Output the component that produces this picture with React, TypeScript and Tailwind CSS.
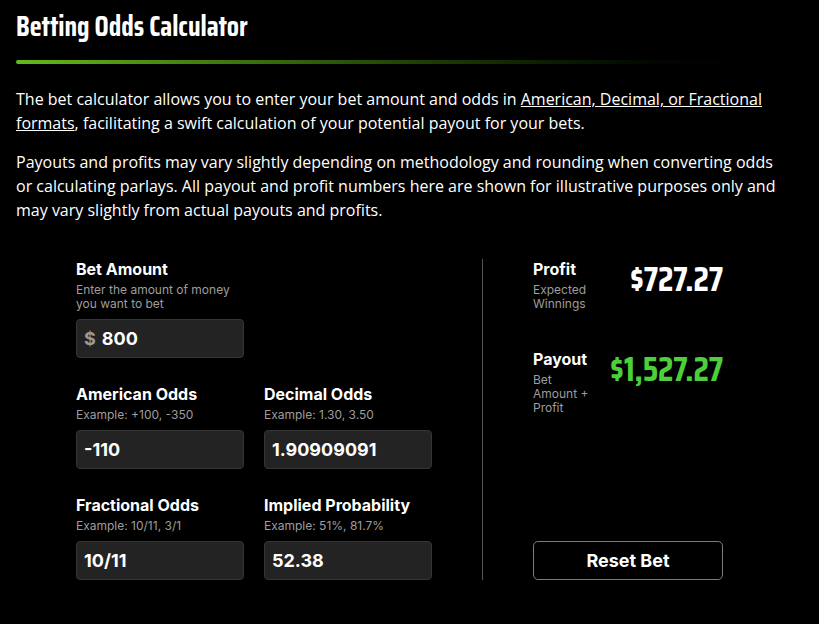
const condensed = { fontFamily: '"Saira Condensed","Liberation Sans Narrow","DejaVu Sans Condensed","Roboto Condensed",sans-serif' }

function Field({ label, hint, value, prefix }: { label: string; hint: string; value: string; prefix?: string }) {
  return (
    <div className="flex flex-col">
      <div className="text-[16px] font-bold leading-5 text-white">{label}</div>
      <div className="mt-1 text-[12px] leading-[14px] text-[#9d9d9d]">{hint}</div>
      <div className="mt-2 flex h-[39px] items-center rounded-[4px] border border-[#353535] bg-[#232323] px-[7px] text-[18px] font-bold">
        {prefix && <span className="mr-[6px] text-[#9a9a9a]">{prefix}</span>}
        <span className="text-white">{value}</span>
      </div>
    </div>
  )
}

function Result({ label, hint, amount, green }: { label: string; hint: string; amount: string; green?: boolean }) {
  return (
    <div className="flex items-start">
      <div className="w-[58px] flex-none">
        <div className="text-[16px] font-bold leading-5 text-white">{label}</div>
        <div className="mt-1 text-[12px] leading-[14px] text-[#9d9d9d]">{hint}</div>
      </div>
      <div
        style={condensed}
        className={`ml-auto text-[34px] font-bold leading-10 ${green ? 'text-[#4ccf3a]' : 'text-white'}`}
      >
        {amount}
      </div>
    </div>
  )
}

export default function App() {
  return (
    <div className="min-h-screen bg-black px-4 pt-[9px] pb-10 text-white" style={{ fontFamily: '"Open Sans",sans-serif' }}>
      <h1 style={condensed} className="text-[28px] font-bold leading-[35px] text-white">
        Betting Odds Calculator
      </h1>
      <div className="mt-4 h-1 w-[764px] rounded-full bg-linear-to-r from-[#64b91d] to-black" />

      <div className="w-[772px]">
        <p className="mt-[23px] text-[16px] leading-6">
          The bet calculator allows you to enter your bet amount and odds in{' '}
          <a href="#" className="underline">
            American, Decimal, or Fractional formats
          </a>
          , facilitating a swift calculation of your potential payout for your bets.
        </p>
        <p className="mt-[15px] text-[16px] leading-6">
          Payouts and profits may vary slightly depending on methodology and rounding when converting odds or
          calculating parlays. All payout and profit numbers here are shown for illustrative purposes only and may
          vary slightly from actual payouts and profits.
        </p>
      </div>

      <section className="ml-[60px] mt-[37px] flex" style={{ fontFamily: 'Inter,sans-serif' }}>
        <div className="grid grid-cols-[168px_168px] gap-x-5 gap-y-[26px]">
          <Field label="Bet Amount" hint="Enter the amount of money you want to bet" value="800" prefix="$" />
          <div />
          <Field label="American Odds" hint="Example: +100, -350" value="-110" />
          <Field label="Decimal Odds" hint="Example: 1.30, 3.50" value="1.90909091" />
          <Field label="Fractional Odds" hint="Example: 10/11, 3/1" value="10/11" />
          <Field label="Implied Probability" hint="Example: 51%, 81.7%" value="52.38" />
        </div>

        <div className="mx-[50px] w-px bg-[#555]" />

        <div className="flex w-[190px] flex-col">
          <Result label="Profit" hint="Expected Winnings" amount="$727.27" />
          <div className="mt-[38px]">
            <Result label="Payout" hint="Bet Amount + Profit" amount="$1,527.27" green />
          </div>
          <button className="mt-auto h-[39px] w-full rounded-[5px] border border-[#7a7a7a] text-[18px] font-bold text-white">
            Reset Bet
          </button>
        </div>
      </section>
    </div>
  )
}
